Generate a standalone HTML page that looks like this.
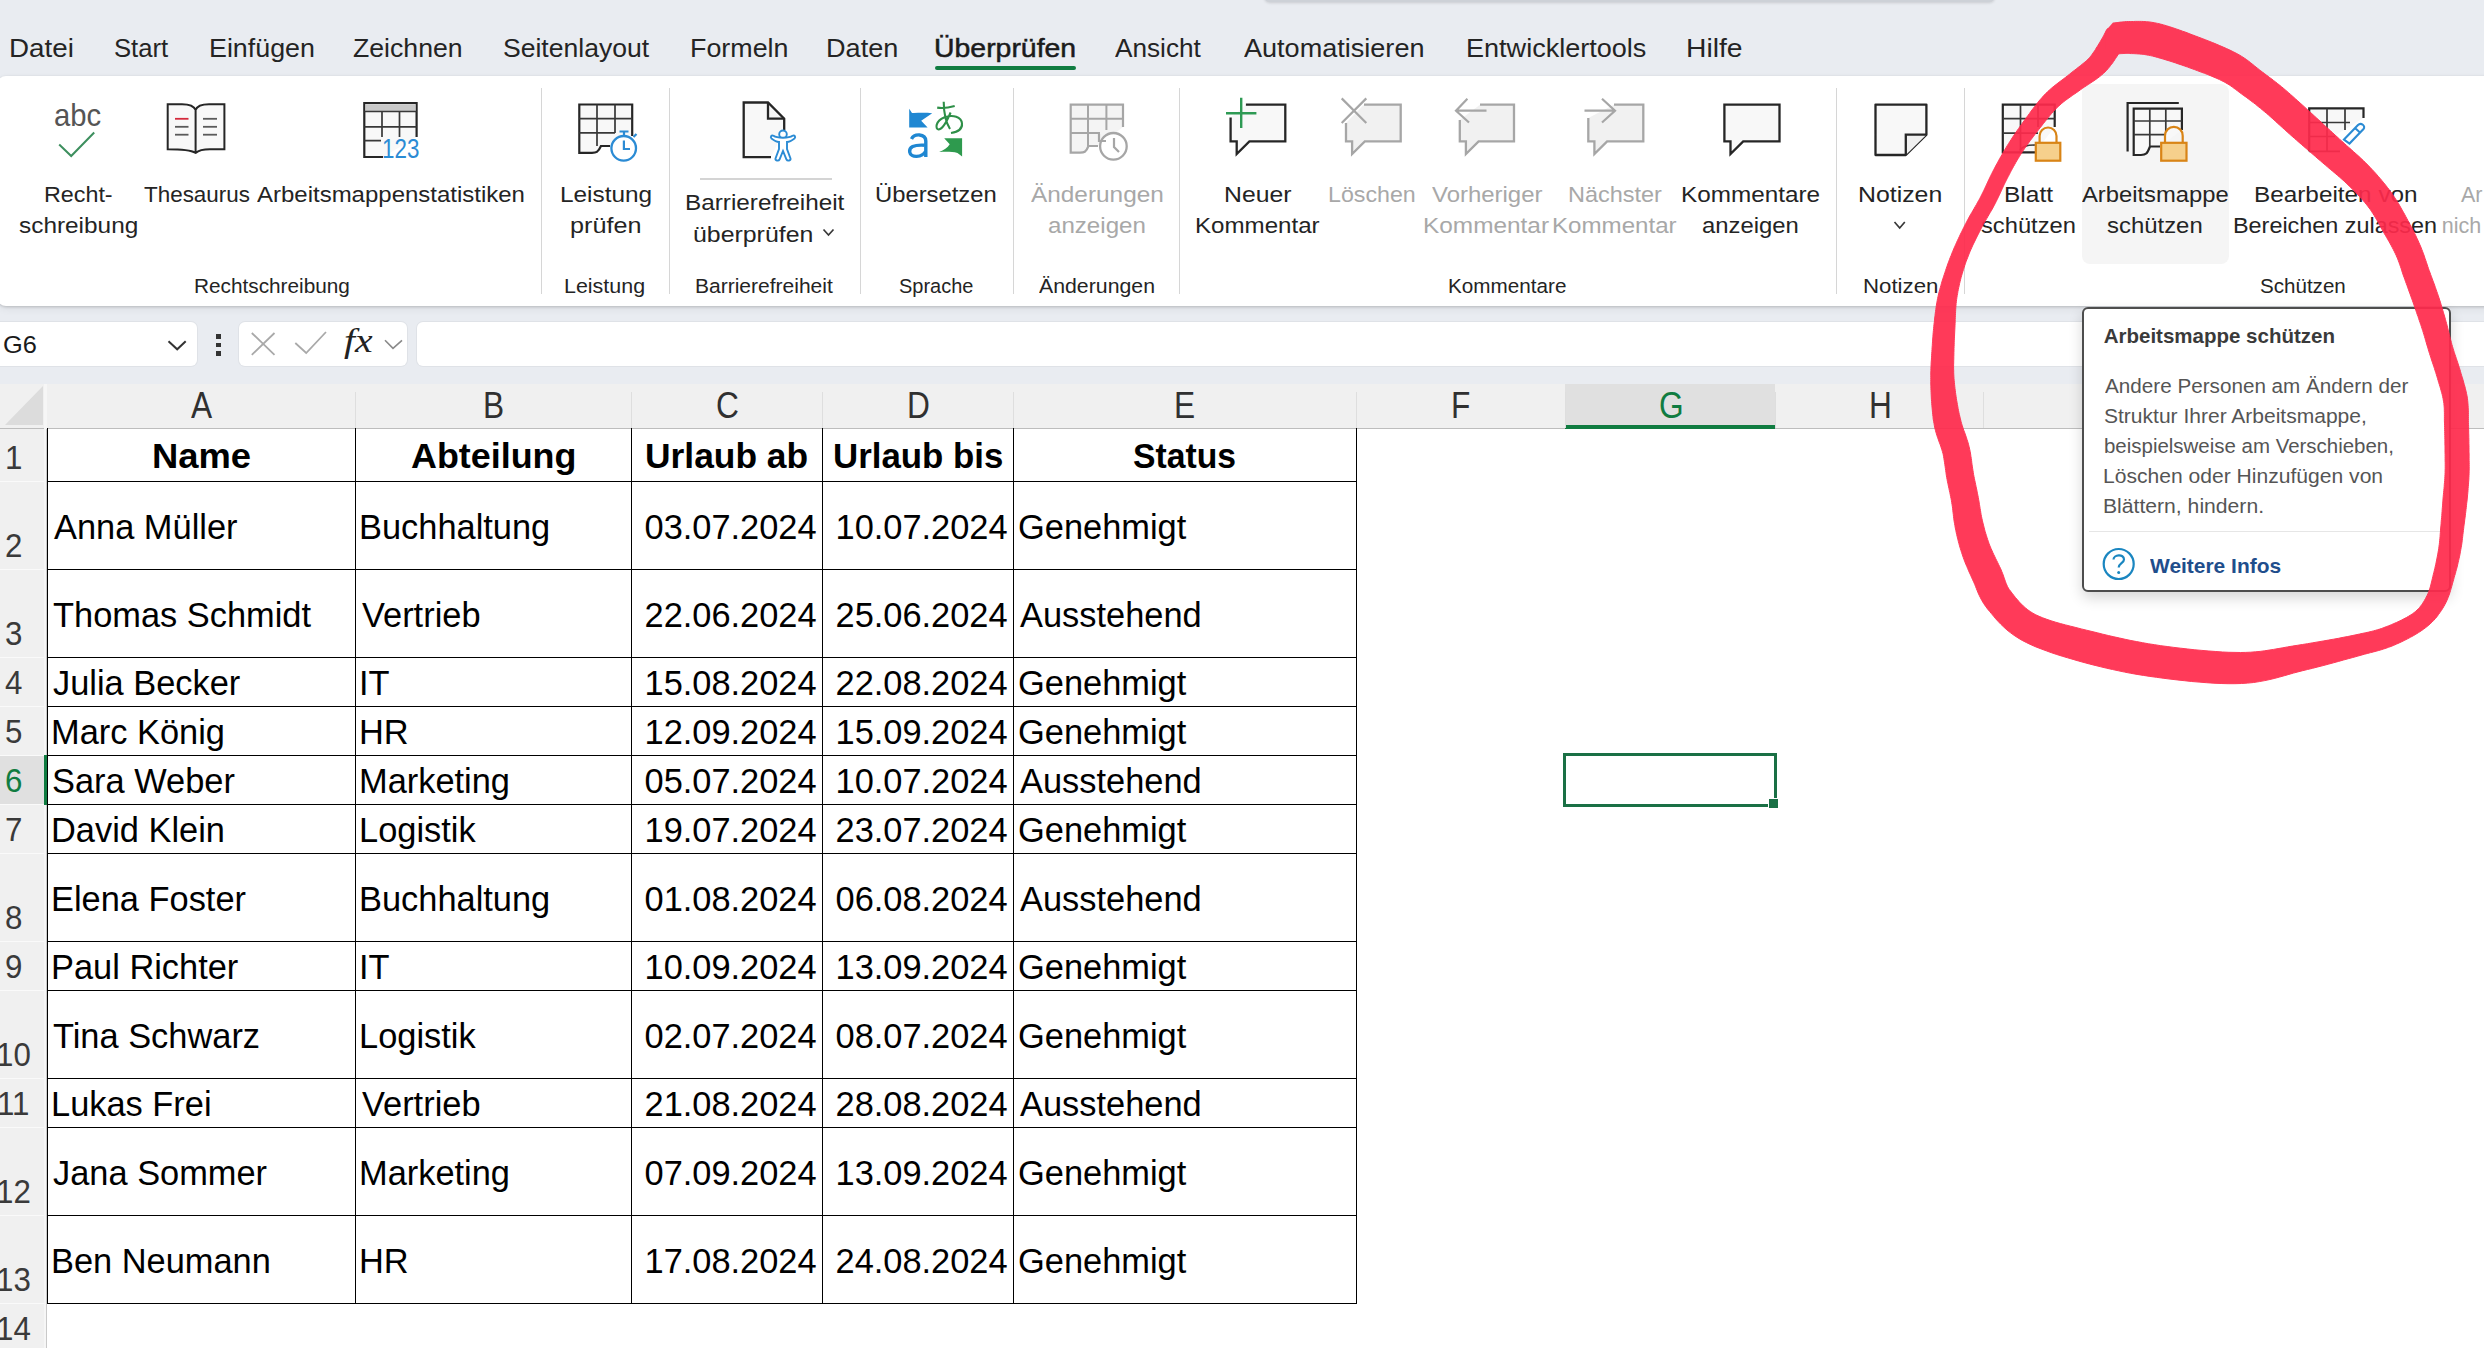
<!DOCTYPE html><html><head><meta charset="utf-8"><style>
html,body{margin:0;padding:0}
body{width:2484px;height:1348px;overflow:hidden;position:relative;background:#e9ecf1;font-family:"Liberation Sans",sans-serif}
.t{position:absolute;white-space:pre;line-height:1;transform-origin:0 0}
.r{position:absolute}
svg{position:absolute;left:0;top:0;overflow:visible}
</style></head><body>
<div class="r" style="left:1264px;top:-4px;width:731px;height:5.5px;background:#cdd1d7;border-radius:0 0 6px 6px;box-shadow:0 1px 3px rgba(0,0,0,.14)"></div>
<div class="t" style="left:9.46px;top:34.90px;font-size:26px;color:#242424;font-weight:normal;font-style:normal;font-family:'Liberation Sans', sans-serif;transform:scaleX(1.0684);">Datei</div>
<div class="t" style="left:114.21px;top:34.90px;font-size:26px;color:#242424;font-weight:normal;font-style:normal;font-family:'Liberation Sans', sans-serif;transform:scaleX(0.9870);">Start</div>
<div class="t" style="left:209.14px;top:34.90px;font-size:26px;color:#242424;font-weight:normal;font-style:normal;font-family:'Liberation Sans', sans-serif;transform:scaleX(1.0323);">Einfügen</div>
<div class="t" style="left:353.28px;top:34.90px;font-size:26px;color:#242424;font-weight:normal;font-style:normal;font-family:'Liberation Sans', sans-serif;transform:scaleX(1.0250);">Zeichnen</div>
<div class="t" style="left:502.58px;top:34.90px;font-size:26px;color:#242424;font-weight:normal;font-style:normal;font-family:'Liberation Sans', sans-serif;transform:scaleX(1.0211);">Seitenlayout</div>
<div class="t" style="left:689.93px;top:34.90px;font-size:26px;color:#242424;font-weight:normal;font-style:normal;font-family:'Liberation Sans', sans-serif;transform:scaleX(1.0326);">Formeln</div>
<div class="t" style="left:825.82px;top:34.90px;font-size:26px;color:#242424;font-weight:normal;font-style:normal;font-family:'Liberation Sans', sans-serif;transform:scaleX(1.0424);">Daten</div>
<div class="t" style="left:934.01px;top:34.90px;font-size:26px;color:#1b1b1b;font-weight:normal;font-style:normal;font-family:'Liberation Sans', sans-serif;transform:scaleX(1.0929);-webkit-text-stroke:0.5px #1b1b1b;">Überprüfen</div>
<div class="t" style="left:1114.50px;top:34.90px;font-size:26px;color:#242424;font-weight:normal;font-style:normal;font-family:'Liberation Sans', sans-serif;transform:scaleX(1.0059);">Ansicht</div>
<div class="t" style="left:1243.50px;top:34.90px;font-size:26px;color:#242424;font-weight:normal;font-style:normal;font-family:'Liberation Sans', sans-serif;transform:scaleX(1.0407);">Automatisieren</div>
<div class="t" style="left:1465.72px;top:34.90px;font-size:26px;color:#242424;font-weight:normal;font-style:normal;font-family:'Liberation Sans', sans-serif;transform:scaleX(1.0404);">Entwicklertools</div>
<div class="t" style="left:1685.82px;top:34.90px;font-size:26px;color:#242424;font-weight:normal;font-style:normal;font-family:'Liberation Sans', sans-serif;transform:scaleX(1.0878);">Hilfe</div>
<div class="r" style="left:935px;top:66px;width:141px;height:4px;background:#107c41;border-radius:2px"></div>
<div class="r" style="left:-3px;top:76px;width:2563px;height:230px;background:#ffffff;border-radius:9px;box-shadow:0 1px 3px rgba(0,0,0,.18),0 3px 8px rgba(0,0,0,.06)"></div>
<div class="r" style="left:2082px;top:84px;width:147px;height:180px;background:#f5f5f5;border-radius:8px"></div>
<div class="r" style="left:541px;top:88px;width:1px;height:206px;background:#d6d6d6;"></div>
<div class="r" style="left:669px;top:88px;width:1px;height:206px;background:#d6d6d6;"></div>
<div class="r" style="left:860px;top:88px;width:1px;height:206px;background:#d6d6d6;"></div>
<div class="r" style="left:1013px;top:88px;width:1px;height:206px;background:#d6d6d6;"></div>
<div class="r" style="left:1179px;top:88px;width:1px;height:206px;background:#d6d6d6;"></div>
<div class="r" style="left:1836px;top:88px;width:1px;height:206px;background:#d6d6d6;"></div>
<div class="r" style="left:1964px;top:88px;width:1px;height:206px;background:#d6d6d6;"></div>
<div class="r" style="left:700px;top:178px;width:132px;height:2px;background:#d4d4d4;"></div>
<div class="t" style="left:44.03px;top:184.60px;font-size:21.5px;color:#242424;font-weight:normal;font-style:normal;font-family:'Liberation Sans', sans-serif;transform:scaleX(1.0836);">Recht-</div>
<div class="t" style="left:19.37px;top:216.30px;font-size:21.5px;color:#242424;font-weight:normal;font-style:normal;font-family:'Liberation Sans', sans-serif;transform:scaleX(1.1340);">schreibung</div>
<div class="t" style="left:144.30px;top:184.60px;font-size:21.5px;color:#242424;font-weight:normal;font-style:normal;font-family:'Liberation Sans', sans-serif;transform:scaleX(1.0426);">Thesaurus</div>
<div class="t" style="left:257.10px;top:184.60px;font-size:21.5px;color:#242424;font-weight:normal;font-style:normal;font-family:'Liberation Sans', sans-serif;transform:scaleX(1.1155);">Arbeitsmappenstatistiken</div>
<div class="t" style="left:559.63px;top:184.60px;font-size:21.5px;color:#242424;font-weight:normal;font-style:normal;font-family:'Liberation Sans', sans-serif;transform:scaleX(1.1333);">Leistung</div>
<div class="t" style="left:569.73px;top:216.30px;font-size:21.5px;color:#242424;font-weight:normal;font-style:normal;font-family:'Liberation Sans', sans-serif;transform:scaleX(1.1712);">prüfen</div>
<div class="t" style="left:684.64px;top:192.80px;font-size:21.5px;color:#242424;font-weight:normal;font-style:normal;font-family:'Liberation Sans', sans-serif;transform:scaleX(1.1302);">Barrierefreiheit</div>
<div class="t" style="left:693.44px;top:224.50px;font-size:21.5px;color:#242424;font-weight:normal;font-style:normal;font-family:'Liberation Sans', sans-serif;transform:scaleX(1.1569);">überprüfen</div>
<div class="t" style="left:875.29px;top:184.60px;font-size:21.5px;color:#242424;font-weight:normal;font-style:normal;font-family:'Liberation Sans', sans-serif;transform:scaleX(1.1075);">Übersetzen</div>
<div class="t" style="left:1030.80px;top:184.60px;font-size:21.5px;color:#a8a8a8;font-weight:normal;font-style:normal;font-family:'Liberation Sans', sans-serif;transform:scaleX(1.1336);">Änderungen</div>
<div class="t" style="left:1047.78px;top:216.30px;font-size:21.5px;color:#a8a8a8;font-weight:normal;font-style:normal;font-family:'Liberation Sans', sans-serif;transform:scaleX(1.1212);">anzeigen</div>
<div class="t" style="left:1224.20px;top:184.60px;font-size:21.5px;color:#242424;font-weight:normal;font-style:normal;font-family:'Liberation Sans', sans-serif;transform:scaleX(1.1518);">Neuer</div>
<div class="t" style="left:1195.06px;top:216.30px;font-size:21.5px;color:#242424;font-weight:normal;font-style:normal;font-family:'Liberation Sans', sans-serif;transform:scaleX(1.1211);">Kommentar</div>
<div class="t" style="left:1327.94px;top:184.60px;font-size:21.5px;color:#a8a8a8;font-weight:normal;font-style:normal;font-family:'Liberation Sans', sans-serif;transform:scaleX(1.0795);">Löschen</div>
<div class="t" style="left:1432.40px;top:184.60px;font-size:21.5px;color:#a8a8a8;font-weight:normal;font-style:normal;font-family:'Liberation Sans', sans-serif;transform:scaleX(1.1131);">Vorheriger</div>
<div class="t" style="left:1423.43px;top:216.30px;font-size:21.5px;color:#a8a8a8;font-weight:normal;font-style:normal;font-family:'Liberation Sans', sans-serif;transform:scaleX(1.1339);">Kommentar</div>
<div class="t" style="left:1568.32px;top:184.60px;font-size:21.5px;color:#a8a8a8;font-weight:normal;font-style:normal;font-family:'Liberation Sans', sans-serif;transform:scaleX(1.0917);">Nächster</div>
<div class="t" style="left:1552.36px;top:216.30px;font-size:21.5px;color:#a8a8a8;font-weight:normal;font-style:normal;font-family:'Liberation Sans', sans-serif;transform:scaleX(1.1211);">Kommentar</div>
<div class="t" style="left:1681.24px;top:184.60px;font-size:21.5px;color:#242424;font-weight:normal;font-style:normal;font-family:'Liberation Sans', sans-serif;transform:scaleX(1.1292);">Kommentare</div>
<div class="t" style="left:1702.29px;top:216.30px;font-size:21.5px;color:#242424;font-weight:normal;font-style:normal;font-family:'Liberation Sans', sans-serif;transform:scaleX(1.1094);">anzeigen</div>
<div class="t" style="left:1857.89px;top:184.60px;font-size:21.5px;color:#242424;font-weight:normal;font-style:normal;font-family:'Liberation Sans', sans-serif;transform:scaleX(1.1557);">Notizen</div>
<div class="t" style="left:2003.62px;top:184.60px;font-size:21.5px;color:#242424;font-weight:normal;font-style:normal;font-family:'Liberation Sans', sans-serif;transform:scaleX(1.1390);">Blatt</div>
<div class="t" style="left:1980.90px;top:216.30px;font-size:21.5px;color:#242424;font-weight:normal;font-style:normal;font-family:'Liberation Sans', sans-serif;transform:scaleX(1.1024);">schützen</div>
<div class="t" style="left:2081.60px;top:184.60px;font-size:21.5px;color:#242424;font-weight:normal;font-style:normal;font-family:'Liberation Sans', sans-serif;transform:scaleX(1.1061);">Arbeitsmappe</div>
<div class="t" style="left:2107.19px;top:216.30px;font-size:21.5px;color:#242424;font-weight:normal;font-style:normal;font-family:'Liberation Sans', sans-serif;transform:scaleX(1.1119);">schützen</div>
<div class="t" style="left:2253.84px;top:184.60px;font-size:21.5px;color:#242424;font-weight:normal;font-style:normal;font-family:'Liberation Sans', sans-serif;transform:scaleX(1.1312);">Bearbeiten von</div>
<div class="t" style="left:2232.72px;top:216.30px;font-size:21.5px;color:#242424;font-weight:normal;font-style:normal;font-family:'Liberation Sans', sans-serif;transform:scaleX(1.0875);">Bereichen zulassen</div>
<div class="t" style="left:2461.00px;top:184.60px;font-size:21.5px;color:#a8a8a8;font-weight:normal;font-style:normal;font-family:'Liberation Sans', sans-serif;">Ar</div>
<div class="t" style="left:2441.80px;top:216.30px;font-size:21.5px;color:#a8a8a8;font-weight:normal;font-style:normal;font-family:'Liberation Sans', sans-serif;">nich</div>
<div class="t" style="left:193.57px;top:275.80px;font-size:20.5px;color:#242424;font-weight:normal;font-style:normal;font-family:'Liberation Sans', sans-serif;transform:scaleX(1.0132);">Rechtschreibung</div>
<div class="t" style="left:564.21px;top:275.80px;font-size:20.5px;color:#242424;font-weight:normal;font-style:normal;font-family:'Liberation Sans', sans-serif;transform:scaleX(1.0459);">Leistung</div>
<div class="t" style="left:695.25px;top:275.80px;font-size:20.5px;color:#242424;font-weight:normal;font-style:normal;font-family:'Liberation Sans', sans-serif;transform:scaleX(1.0250);">Barrierefreiheit</div>
<div class="t" style="left:899.23px;top:275.80px;font-size:20.5px;color:#242424;font-weight:normal;font-style:normal;font-family:'Liberation Sans', sans-serif;transform:scaleX(0.9747);">Sprache</div>
<div class="t" style="left:1038.80px;top:275.80px;font-size:20.5px;color:#242424;font-weight:normal;font-style:normal;font-family:'Liberation Sans', sans-serif;transform:scaleX(1.0382);">Änderungen</div>
<div class="t" style="left:1448.28px;top:275.80px;font-size:20.5px;color:#242424;font-weight:normal;font-style:normal;font-family:'Liberation Sans', sans-serif;transform:scaleX(1.0087);">Kommentare</div>
<div class="t" style="left:1862.83px;top:275.80px;font-size:20.5px;color:#242424;font-weight:normal;font-style:normal;font-family:'Liberation Sans', sans-serif;transform:scaleX(1.0848);">Notizen</div>
<div class="t" style="left:2259.70px;top:275.80px;font-size:20.5px;color:#242424;font-weight:normal;font-style:normal;font-family:'Liberation Sans', sans-serif;transform:scaleX(1.0036);">Schützen</div>
<svg width="2484" height="400"><polyline points="59.2,144.5 71.2,156 94.2,132.5" fill="none" stroke="#3d8f5e" stroke-width="2"/><path d="M195.6,152.9 C190,149.7 182,149.3 167.7,149.3 V104.2 H182 C190,104.2 194,106 195.6,110 C197,106 201,104.2 209,104.2 H224.4 V149.3 H210 C202,149.3 199,150 195.6,152.9 Z M195.6,110 V152.9" fill="#f8f8f8" stroke="#262626" stroke-width="2"/><line x1="175" y1="118.8" x2="188.5" y2="118.8" stroke="#d42a3c" stroke-width="1.8"/><line x1="175" y1="126.8" x2="188.5" y2="126.8" stroke="#5a5a5a" stroke-width="1.8"/><line x1="175" y1="134.7" x2="188.5" y2="134.7" stroke="#5a5a5a" stroke-width="1.8"/><line x1="203" y1="118.8" x2="217" y2="118.8" stroke="#5a5a5a" stroke-width="1.8"/><line x1="203" y1="126.8" x2="217" y2="126.8" stroke="#5a5a5a" stroke-width="1.8"/><line x1="203" y1="134.7" x2="217" y2="134.7" stroke="#5a5a5a" stroke-width="1.8"/><path d="M383,157 H364.3 V103 H416.6 V137" fill="#f8f8f8" stroke="#262626" stroke-width="2.2"/><rect x="365.4" y="104.2" width="50.2" height="7" fill="#c9c9c9"/><path d="M364.3,111.5 H416.6 M364.3,126.8 H416.6 M364.3,140.7 H381 M382,111.5 V137 M399.5,111.5 V137" fill="none" stroke="#383838" stroke-width="1.7"/><path d="M610,146 H601 C598,152.5 596,152.8 592,152.8 H579.3 V104.5 H632.2 V136" fill="#f8f8f8" stroke="#262626" stroke-width="2.2"/><path d="M579.3,118.7 H632.2 M579.3,132.9 H615 M597,104.5 V146 M615,104.5 V132.9" fill="none" stroke="#383838" stroke-width="1.7"/><circle cx="623.7" cy="148.3" r="12.3" fill="#fff" stroke="#2b8bd4" stroke-width="2.3"/><path d="M623.9,140.5 V149 H630 M619.5,131.5 H628.5 M624,131.5 V135.5 M633.5,137 L636.5,134" fill="none" stroke="#2b8bd4" stroke-width="2.2"/><path d="M771,157.1 H743.7 V102.5 H768 L784.2,118.7 V130" fill="#f8f8f8" stroke="#262626" stroke-width="2.3"/><path d="M768,102.5 V118.7 H784.2" fill="none" stroke="#262626" stroke-width="2.3"/><circle cx="783" cy="134.3" r="3.8" fill="#fff" stroke="#2b8bd4" stroke-width="1.9"/><path d="M771.5,138.5 C774,140.5 778,142 779,142 V149 L775.5,158.5 C775,160.5 778.5,161.5 779.5,159.5 L783,151 L786.5,159.5 C787.5,161.5 791,160.5 790.5,158.5 L787,149 V142 C788,142 792,140.5 794.5,138.5 C796,137 794.5,134.5 792.5,135.8 C789,138.3 777,138.3 773.5,135.8 C771.5,134.5 770,137 771.5,138.5 Z" fill="#fff" stroke="#2b8bd4" stroke-width="1.9"/><path d="M909.2,108.7 L912,112.9 C918,113 926,112.5 932.2,113.3 L921.2,120.7 L927.6,127.6 H909.2 Z" fill="#1f87d2"/><path d="M911.5,139 C914,133.5 925.5,133 925.8,141 V157 M925.8,145.3 C913,144.3 909,147.5 909.7,152 C910.5,158 922,158 925.8,151" fill="none" stroke="#1f87d2" stroke-width="3.4"/><path d="M944.2,138.2 H962.1 V156.6 L957.5,152.9 C952,151.5 945,151.6 939.1,152 C944,150 947.5,148 949.7,144.2 Z" fill="#2e9a4e"/><path d="M937.2,107.6 C942,108.4 949,107.6 954.7,106 M943.7,101.8 C943.8,112 945.5,122 950,129 M950.6,112.5 C947,121 942,129.5 938.5,129.5 C935,129 935.5,121 944,117.5 C953,114 961.5,117 962,123.5 C962.5,129 957,132 951,133" fill="none" stroke="#2e8f48" stroke-width="2.1"/><path d="M1098,146 H1088.5 C1086,152.5 1084,152.6 1080,152.6 H1070.7 V104.7 H1123 V127" fill="#f4f4f4" stroke="#a6a6a6" stroke-width="2.2"/><path d="M1070.7,118.8 H1123 M1070.7,132.9 H1100 M1088,104.7 V146 M1106.4,104.7 V130" fill="none" stroke="#a6a6a6" stroke-width="2"/><circle cx="1113.4" cy="146.3" r="13.3" fill="#fff" stroke="#a6a6a6" stroke-width="2.3"/><path d="M1114,138 V147 L1119,152 M1099,134 V141 H1106" fill="none" stroke="#a6a6a6" stroke-width="2.2"/><path d="M1245.9,104.7 H1285.3 V141.4 H1249.3999999999999 L1236.6999999999998,154 V141.4 H1230.6 V117.4" fill="#f8f8f8" stroke="#262626" stroke-width="2.3" stroke-linejoin="miter"/><path d="M1241.2,97.7 V128 M1226,113.2 H1256.4" stroke="#2e9a54" stroke-width="2.4"/><path d="M1364,104.7 H1400.7 V141.4 H1364.8 L1352.1,154 V141.4 H1346 V123" fill="#f1f1f1" stroke="#a6a6a6" stroke-width="2.3" stroke-linejoin="miter"/><path d="M1341.7,98.4 L1366.3,123 M1366.3,98.4 L1341.7,123" stroke="#a6a6a6" stroke-width="2.2"/><path d="M1480,104.7 H1514 V141.4 H1478.6 L1465.8999999999999,154 V141.4 H1459.8 V120" fill="#f1f1f1" stroke="#a6a6a6" stroke-width="2.3" stroke-linejoin="miter"/><path d="M1456,110.7 H1486.5 M1467.4,98.8 L1456,110.7 L1469,122.5" fill="none" stroke="#a6a6a6" stroke-width="2.2"/><path d="M1614,104.7 H1643.3 V141.4 H1607.1 L1594.3999999999999,154 V141.4 H1588.3 V118" fill="#f1f1f1" stroke="#a6a6a6" stroke-width="2.3" stroke-linejoin="miter"/><path d="M1584.5,110.7 H1615 M1602,98.8 L1615,110.7 L1602,122.5" fill="none" stroke="#a6a6a6" stroke-width="2.2"/><path d="M1724.4,104.7 H1779.5 V141.4 H1743.2 L1730.5,154 V141.4 H1724.4 V104.7 Z" fill="#f8f8f8" stroke="#262626" stroke-width="2.3" stroke-linejoin="miter"/><path d="M1875.5,104.6 H1926.4 V134.7 L1905.8,155 H1875.5 Z" fill="#f8f8f8" stroke="#262626" stroke-width="2.3" stroke-linejoin="round"/><path d="M1905.8,155 V134.7 H1926.4" fill="#f0f0f0" stroke="#262626" stroke-width="2.3"/><path d="M2035,152.3 H2002.8 V104.6 H2054.7 V127" fill="#f8f8f8" stroke="#262626" stroke-width="2.2"/><path d="M2002.8,118.7 H2054.7 M2002.8,133.2 H2038 M2020.5,104.6 V152.3 M2038,104.6 V127" fill="none" stroke="#383838" stroke-width="1.7"/><path d="M2020,150 C2023,146.5 2026,145 2035,145" fill="none" stroke="#383838" stroke-width="1.7"/><path d="M2039.6,142.8 V135.95000000000005 A8.450000000000045,8.450000000000045 0 0 1 2056.5,135.95000000000005 V142.8" fill="none" stroke="#d98416" stroke-width="2.2"/><rect x="2035.8" y="142.8" width="24.500000000000227" height="17.9" fill="#f6d08c" stroke="#d98416" stroke-width="2.2"/><path d="M2127.6,151.5 V103 H2178.8" fill="none" stroke="#262626" stroke-width="2.2"/><path d="M2160,146.5 H2150 C2147,154 2146,155 2141,155 H2133.7 V108.7 H2181.9 V130" fill="#f8f8f8" stroke="#262626" stroke-width="2.2"/><path d="M2133.7,121 H2181.9 M2133.7,134.7 H2165.8 M2149.8,108.7 V146.5 M2165.8,108.7 V132" fill="none" stroke="#383838" stroke-width="1.7"/><path d="M2165.0,142.8 V135.64999999999992 A8.849999999999909,8.849999999999909 0 0 1 2182.7,135.64999999999992 V142.8" fill="none" stroke="#d98416" stroke-width="2.2"/><rect x="2161.2" y="142.8" width="25.300000000000182" height="17.9" fill="#f6d08c" stroke="#d98416" stroke-width="2.2"/><path d="M2309.2,151.3 V108.4 H2363.5 V118" fill="#f8f8f8" stroke="#262626" stroke-width="2.2"/><path d="M2309.2,122.5 H2350 M2309.2,136.5 H2335 M2327,108.4 V151.3 M2345,108.4 V130 M2309.2,151.3 H2340" fill="none" stroke="#383838" stroke-width="1.7"/><path d="M2344,139.5 L2358,125 C2361,122 2366,126 2363.5,129 L2349.5,143.5 Z M2355,128 L2360.5,133" fill="#fff" stroke="#2b8bd4" stroke-width="2.1"/><polyline points="823.5,229.5 828.5,235 833.5,229.5" fill="none" stroke="#383838" stroke-width="1.7"/><polyline points="1894.5,222 1899.7,228 1904.8,222" fill="none" stroke="#383838" stroke-width="1.7"/></svg><div class="t" style="left:54.29px;top:98.90px;font-size:32px;color:#555555;font-weight:normal;font-style:normal;font-family:'Liberation Sans', sans-serif;transform:scaleX(0.9140);">abc</div><div class="t" style="left:382.34px;top:135.60px;font-size:27px;color:#2b8bd4;font-weight:normal;font-style:normal;font-family:'Liberation Sans', sans-serif;transform:scaleX(0.8286);">123</div>
<div class="r" style="left:0px;top:322px;width:197px;height:44px;background:#ffffff;border-radius:0 6px 6px 0;box-shadow:0 0 0 1px rgba(0,0,0,.04)"></div>
<div class="t" style="left:3.44px;top:333.00px;font-size:24px;color:#1a1a1a;font-weight:normal;font-style:normal;font-family:'Liberation Sans', sans-serif;transform:scaleX(1.0567);">G6</div>
<div class="r" style="left:239px;top:322px;width:168px;height:44px;background:#ffffff;border-radius:6px;box-shadow:0 0 0 1px rgba(0,0,0,.04)"></div>
<div class="r" style="left:417px;top:322px;width:2143px;height:44px;background:#ffffff;border-radius:6px 0 0 6px;box-shadow:0 0 0 1px rgba(0,0,0,.04)"></div>
<div class="r" style="left:216px;top:334px;width:4.5px;height:4.5px;background:#333"></div>
<div class="r" style="left:216px;top:342.5px;width:4.5px;height:4.5px;background:#333"></div>
<div class="r" style="left:216px;top:351px;width:4.5px;height:4.5px;background:#333"></div>
<div class="t" style="left:344.00px;top:324.00px;font-size:34px;color:#222;font-weight:normal;font-style:italic;font-family:'Liberation Serif', serif;transform:scaleX(1.1667);">fx</div>
<svg width="2484" height="400"><polyline points="168.5,341.2 177.2,349.3 185.7,341.2" fill="none" stroke="#333" stroke-width="2"/><path d="M251.8,333 L274.5,354.8 M274.5,333 L251.8,354.8" stroke="#a9a9a9" stroke-width="1.8"/><polyline points="295.3,343 306.2,353 326,332" fill="none" stroke="#a9a9a9" stroke-width="1.8"/><polyline points="385,340.3 393,348.4 402,340.3" fill="none" stroke="#8a8a8a" stroke-width="1.6"/></svg>
<div class="r" style="left:0px;top:384px;width:2484px;height:44px;background:#f0f0f0;"></div>
<div class="r" style="left:0px;top:428px;width:2484px;height:1px;background:#bdbdbd;"></div>
<div class="r" style="left:1565px;top:384px;width:210px;height:44px;background:#e0e0e0;"></div>
<div class="r" style="left:1565px;top:425px;width:210px;height:3.5px;background:#107c41;"></div>
<div class="r" style="left:0px;top:429px;width:46px;height:919px;background:#f0f0f0;"></div>
<div class="r" style="left:44px;top:384px;width:3px;height:964px;background:#f6f6f6;"></div>
<div class="r" style="left:46px;top:429px;width:1px;height:919px;background:#c9c9c9;"></div>
<div class="r" style="left:355px;top:392px;width:1px;height:36px;background:#dedede;"></div>
<div class="r" style="left:631px;top:392px;width:1px;height:36px;background:#dedede;"></div>
<div class="r" style="left:822px;top:392px;width:1px;height:36px;background:#dedede;"></div>
<div class="r" style="left:1013px;top:392px;width:1px;height:36px;background:#dedede;"></div>
<div class="r" style="left:1356px;top:392px;width:1px;height:36px;background:#dedede;"></div>
<div class="r" style="left:1565px;top:392px;width:1px;height:36px;background:#dedede;"></div>
<div class="r" style="left:1775px;top:392px;width:1px;height:36px;background:#dedede;"></div>
<div class="r" style="left:1983px;top:392px;width:1px;height:36px;background:#dedede;"></div>
<div class="r" style="left:0px;top:481px;width:44px;height:1px;background:#fafafa;"></div>
<div class="r" style="left:0px;top:569px;width:44px;height:1px;background:#fafafa;"></div>
<div class="r" style="left:0px;top:657px;width:44px;height:1px;background:#fafafa;"></div>
<div class="r" style="left:0px;top:706px;width:44px;height:1px;background:#fafafa;"></div>
<div class="r" style="left:0px;top:755px;width:44px;height:1px;background:#fafafa;"></div>
<div class="r" style="left:0px;top:804px;width:44px;height:1px;background:#fafafa;"></div>
<div class="r" style="left:0px;top:853px;width:44px;height:1px;background:#fafafa;"></div>
<div class="r" style="left:0px;top:941px;width:44px;height:1px;background:#fafafa;"></div>
<div class="r" style="left:0px;top:990px;width:44px;height:1px;background:#fafafa;"></div>
<div class="r" style="left:0px;top:1078px;width:44px;height:1px;background:#fafafa;"></div>
<div class="r" style="left:0px;top:1127px;width:44px;height:1px;background:#fafafa;"></div>
<div class="r" style="left:0px;top:1215px;width:44px;height:1px;background:#fafafa;"></div>
<div class="r" style="left:0px;top:1303px;width:44px;height:1px;background:#fafafa;"></div>
<div class="r" style="left:0px;top:756px;width:44px;height:48px;background:#e0e0e0;"></div>
<div class="r" style="left:44px;top:755px;width:3.5px;height:50px;background:#107c41;"></div>
<div class="t" style="left:191.44px;top:387.80px;font-size:36px;color:#303030;font-weight:normal;font-style:normal;font-family:'Liberation Sans', sans-serif;transform:scaleX(0.8800);">A</div>
<div class="t" style="left:483.00px;top:387.80px;font-size:36px;color:#303030;font-weight:normal;font-style:normal;font-family:'Liberation Sans', sans-serif;transform:scaleX(0.8800);">B</div>
<div class="t" style="left:715.62px;top:387.80px;font-size:36px;color:#303030;font-weight:normal;font-style:normal;font-family:'Liberation Sans', sans-serif;transform:scaleX(0.8800);">C</div>
<div class="t" style="left:906.62px;top:387.80px;font-size:36px;color:#303030;font-weight:normal;font-style:normal;font-family:'Liberation Sans', sans-serif;transform:scaleX(0.8800);">D</div>
<div class="t" style="left:1174.06px;top:387.80px;font-size:36px;color:#303030;font-weight:normal;font-style:normal;font-family:'Liberation Sans', sans-serif;transform:scaleX(0.8800);">E</div>
<div class="t" style="left:1450.94px;top:387.80px;font-size:36px;color:#303030;font-weight:normal;font-style:normal;font-family:'Liberation Sans', sans-serif;transform:scaleX(0.8800);">F</div>
<div class="t" style="left:1659.12px;top:387.80px;font-size:36px;color:#107c41;font-weight:normal;font-style:normal;font-family:'Liberation Sans', sans-serif;transform:scaleX(0.8800);">G</div>
<div class="t" style="left:1868.56px;top:387.80px;font-size:36px;color:#303030;font-weight:normal;font-style:normal;font-family:'Liberation Sans', sans-serif;transform:scaleX(0.8800);">H</div>
<svg width="60" height="60" style="left:0;top:380px"><polygon points="43,6 43,45 5,45" fill="#dcdcdc"/></svg>
<div class="t" style="left:4.80px;top:440.00px;font-size:34px;color:#3a3a3a;font-weight:normal;font-style:normal;font-family:'Liberation Sans', sans-serif;transform:scaleX(0.9200);">1</div>
<div class="t" style="left:5.26px;top:528.00px;font-size:34px;color:#3a3a3a;font-weight:normal;font-style:normal;font-family:'Liberation Sans', sans-serif;transform:scaleX(0.9200);">2</div>
<div class="t" style="left:5.26px;top:616.00px;font-size:34px;color:#3a3a3a;font-weight:normal;font-style:normal;font-family:'Liberation Sans', sans-serif;transform:scaleX(0.9200);">3</div>
<div class="t" style="left:5.26px;top:665.00px;font-size:34px;color:#3a3a3a;font-weight:normal;font-style:normal;font-family:'Liberation Sans', sans-serif;transform:scaleX(0.9200);">4</div>
<div class="t" style="left:4.80px;top:714.00px;font-size:34px;color:#3a3a3a;font-weight:normal;font-style:normal;font-family:'Liberation Sans', sans-serif;transform:scaleX(0.9200);">5</div>
<div class="t" style="left:4.80px;top:763.00px;font-size:34px;color:#107c41;font-weight:normal;font-style:normal;font-family:'Liberation Sans', sans-serif;transform:scaleX(0.9200);">6</div>
<div class="t" style="left:5.26px;top:812.00px;font-size:34px;color:#3a3a3a;font-weight:normal;font-style:normal;font-family:'Liberation Sans', sans-serif;transform:scaleX(0.9200);">7</div>
<div class="t" style="left:5.26px;top:900.00px;font-size:34px;color:#3a3a3a;font-weight:normal;font-style:normal;font-family:'Liberation Sans', sans-serif;transform:scaleX(0.9200);">8</div>
<div class="t" style="left:5.26px;top:949.00px;font-size:34px;color:#3a3a3a;font-weight:normal;font-style:normal;font-family:'Liberation Sans', sans-serif;transform:scaleX(0.9200);">9</div>
<div class="t" style="left:-4.40px;top:1037.00px;font-size:34px;color:#3a3a3a;font-weight:normal;font-style:normal;font-family:'Liberation Sans', sans-serif;transform:scaleX(0.9200);">10</div>
<div class="t" style="left:-3.02px;top:1086.00px;font-size:34px;color:#3a3a3a;font-weight:normal;font-style:normal;font-family:'Liberation Sans', sans-serif;transform:scaleX(0.9200);">11</div>
<div class="t" style="left:-3.94px;top:1174.00px;font-size:34px;color:#3a3a3a;font-weight:normal;font-style:normal;font-family:'Liberation Sans', sans-serif;transform:scaleX(0.9200);">12</div>
<div class="t" style="left:-4.40px;top:1262.00px;font-size:34px;color:#3a3a3a;font-weight:normal;font-style:normal;font-family:'Liberation Sans', sans-serif;transform:scaleX(0.9200);">13</div>
<div class="t" style="left:-4.40px;top:1311.00px;font-size:34px;color:#3a3a3a;font-weight:normal;font-style:normal;font-family:'Liberation Sans', sans-serif;transform:scaleX(0.9200);">14</div>
<div class="r" style="left:47px;top:429px;width:2437px;height:919px;background:#ffffff;"></div>
<div class="r" style="left:0px;top:481px;width:44px;height:1px;background:#fafafa;"></div>
<div class="r" style="left:0px;top:569px;width:44px;height:1px;background:#fafafa;"></div>
<div class="r" style="left:0px;top:657px;width:44px;height:1px;background:#fafafa;"></div>
<div class="r" style="left:0px;top:706px;width:44px;height:1px;background:#fafafa;"></div>
<div class="r" style="left:0px;top:755px;width:44px;height:1px;background:#fafafa;"></div>
<div class="r" style="left:0px;top:804px;width:44px;height:1px;background:#fafafa;"></div>
<div class="r" style="left:0px;top:853px;width:44px;height:1px;background:#fafafa;"></div>
<div class="r" style="left:0px;top:941px;width:44px;height:1px;background:#fafafa;"></div>
<div class="r" style="left:0px;top:990px;width:44px;height:1px;background:#fafafa;"></div>
<div class="r" style="left:0px;top:1078px;width:44px;height:1px;background:#fafafa;"></div>
<div class="r" style="left:0px;top:1127px;width:44px;height:1px;background:#fafafa;"></div>
<div class="r" style="left:0px;top:1215px;width:44px;height:1px;background:#fafafa;"></div>
<div class="r" style="left:0px;top:1303px;width:44px;height:1px;background:#fafafa;"></div>
<div class="r" style="left:46.5px;top:428px;width:1.5px;height:876px;background:#000;"></div>
<div class="r" style="left:354.5px;top:428px;width:1.5px;height:876px;background:#000;"></div>
<div class="r" style="left:630.5px;top:428px;width:1.5px;height:876px;background:#000;"></div>
<div class="r" style="left:821.5px;top:428px;width:1.5px;height:876px;background:#000;"></div>
<div class="r" style="left:1012.5px;top:428px;width:1.5px;height:876px;background:#000;"></div>
<div class="r" style="left:1355.5px;top:428px;width:1.5px;height:876px;background:#000;"></div>
<div class="r" style="left:47px;top:480.5px;width:1310px;height:1.5px;background:#000;"></div>
<div class="r" style="left:47px;top:568.5px;width:1310px;height:1.5px;background:#000;"></div>
<div class="r" style="left:47px;top:656.5px;width:1310px;height:1.5px;background:#000;"></div>
<div class="r" style="left:47px;top:705.5px;width:1310px;height:1.5px;background:#000;"></div>
<div class="r" style="left:47px;top:754.5px;width:1310px;height:1.5px;background:#000;"></div>
<div class="r" style="left:47px;top:803.5px;width:1310px;height:1.5px;background:#000;"></div>
<div class="r" style="left:47px;top:852.5px;width:1310px;height:1.5px;background:#000;"></div>
<div class="r" style="left:47px;top:940.5px;width:1310px;height:1.5px;background:#000;"></div>
<div class="r" style="left:47px;top:989.5px;width:1310px;height:1.5px;background:#000;"></div>
<div class="r" style="left:47px;top:1077.5px;width:1310px;height:1.5px;background:#000;"></div>
<div class="r" style="left:47px;top:1126.5px;width:1310px;height:1.5px;background:#000;"></div>
<div class="r" style="left:47px;top:1214.5px;width:1310px;height:1.5px;background:#000;"></div>
<div class="r" style="left:47px;top:1302.5px;width:1310px;height:1.5px;background:#000;"></div>
<div class="t" style="left:152.12px;top:437.80px;font-size:35px;color:#000;font-weight:bold;font-style:normal;font-family:'Liberation Sans', sans-serif;transform:scaleX(1.0391);">Name</div>
<div class="t" style="left:410.77px;top:437.80px;font-size:35px;color:#000;font-weight:bold;font-style:normal;font-family:'Liberation Sans', sans-serif;transform:scaleX(1.0253);">Abteilung</div>
<div class="t" style="left:645.48px;top:437.80px;font-size:35px;color:#000;font-weight:bold;font-style:normal;font-family:'Liberation Sans', sans-serif;transform:scaleX(1.0108);">Urlaub ab</div>
<div class="t" style="left:832.71px;top:437.80px;font-size:35px;color:#000;font-weight:bold;font-style:normal;font-family:'Liberation Sans', sans-serif;transform:scaleX(0.9952);">Urlaub bis</div>
<div class="t" style="left:1133.24px;top:437.80px;font-size:35px;color:#000;font-weight:bold;font-style:normal;font-family:'Liberation Sans', sans-serif;transform:scaleX(0.9629);">Status</div>
<div class="t" style="left:54.00px;top:509.80px;font-size:34.4px;color:#000;font-weight:normal;font-style:normal;font-family:'Liberation Sans', sans-serif;">Anna Müller</div>
<div class="t" style="left:359.00px;top:509.80px;font-size:34.4px;color:#000;font-weight:normal;font-style:normal;font-family:'Liberation Sans', sans-serif;">Buchhaltung</div>
<div class="t" style="left:644.50px;top:509.80px;font-size:34.4px;color:#000;font-weight:normal;font-style:normal;font-family:'Liberation Sans', sans-serif;">03.07.2024</div>
<div class="t" style="left:835.50px;top:509.80px;font-size:34.4px;color:#000;font-weight:normal;font-style:normal;font-family:'Liberation Sans', sans-serif;">10.07.2024</div>
<div class="t" style="left:1018.00px;top:509.80px;font-size:34.4px;color:#000;font-weight:normal;font-style:normal;font-family:'Liberation Sans', sans-serif;">Genehmigt</div>
<div class="t" style="left:53.00px;top:597.80px;font-size:34.4px;color:#000;font-weight:normal;font-style:normal;font-family:'Liberation Sans', sans-serif;">Thomas Schmidt</div>
<div class="t" style="left:362.00px;top:597.80px;font-size:34.4px;color:#000;font-weight:normal;font-style:normal;font-family:'Liberation Sans', sans-serif;">Vertrieb</div>
<div class="t" style="left:644.50px;top:597.80px;font-size:34.4px;color:#000;font-weight:normal;font-style:normal;font-family:'Liberation Sans', sans-serif;">22.06.2024</div>
<div class="t" style="left:835.50px;top:597.80px;font-size:34.4px;color:#000;font-weight:normal;font-style:normal;font-family:'Liberation Sans', sans-serif;">25.06.2024</div>
<div class="t" style="left:1020.00px;top:597.80px;font-size:34.4px;color:#000;font-weight:normal;font-style:normal;font-family:'Liberation Sans', sans-serif;">Ausstehend</div>
<div class="t" style="left:53.00px;top:666.30px;font-size:34.4px;color:#000;font-weight:normal;font-style:normal;font-family:'Liberation Sans', sans-serif;">Julia Becker</div>
<div class="t" style="left:359.00px;top:666.30px;font-size:34.4px;color:#000;font-weight:normal;font-style:normal;font-family:'Liberation Sans', sans-serif;">IT</div>
<div class="t" style="left:644.50px;top:666.30px;font-size:34.4px;color:#000;font-weight:normal;font-style:normal;font-family:'Liberation Sans', sans-serif;">15.08.2024</div>
<div class="t" style="left:835.50px;top:666.30px;font-size:34.4px;color:#000;font-weight:normal;font-style:normal;font-family:'Liberation Sans', sans-serif;">22.08.2024</div>
<div class="t" style="left:1018.00px;top:666.30px;font-size:34.4px;color:#000;font-weight:normal;font-style:normal;font-family:'Liberation Sans', sans-serif;">Genehmigt</div>
<div class="t" style="left:51.00px;top:715.30px;font-size:34.4px;color:#000;font-weight:normal;font-style:normal;font-family:'Liberation Sans', sans-serif;">Marc König</div>
<div class="t" style="left:359.00px;top:715.30px;font-size:34.4px;color:#000;font-weight:normal;font-style:normal;font-family:'Liberation Sans', sans-serif;">HR</div>
<div class="t" style="left:644.50px;top:715.30px;font-size:34.4px;color:#000;font-weight:normal;font-style:normal;font-family:'Liberation Sans', sans-serif;">12.09.2024</div>
<div class="t" style="left:835.50px;top:715.30px;font-size:34.4px;color:#000;font-weight:normal;font-style:normal;font-family:'Liberation Sans', sans-serif;">15.09.2024</div>
<div class="t" style="left:1018.00px;top:715.30px;font-size:34.4px;color:#000;font-weight:normal;font-style:normal;font-family:'Liberation Sans', sans-serif;">Genehmigt</div>
<div class="t" style="left:52.00px;top:764.30px;font-size:34.4px;color:#000;font-weight:normal;font-style:normal;font-family:'Liberation Sans', sans-serif;">Sara Weber</div>
<div class="t" style="left:359.00px;top:764.30px;font-size:34.4px;color:#000;font-weight:normal;font-style:normal;font-family:'Liberation Sans', sans-serif;">Marketing</div>
<div class="t" style="left:644.50px;top:764.30px;font-size:34.4px;color:#000;font-weight:normal;font-style:normal;font-family:'Liberation Sans', sans-serif;">05.07.2024</div>
<div class="t" style="left:835.50px;top:764.30px;font-size:34.4px;color:#000;font-weight:normal;font-style:normal;font-family:'Liberation Sans', sans-serif;">10.07.2024</div>
<div class="t" style="left:1020.00px;top:764.30px;font-size:34.4px;color:#000;font-weight:normal;font-style:normal;font-family:'Liberation Sans', sans-serif;">Ausstehend</div>
<div class="t" style="left:51.00px;top:813.30px;font-size:34.4px;color:#000;font-weight:normal;font-style:normal;font-family:'Liberation Sans', sans-serif;">David Klein</div>
<div class="t" style="left:359.00px;top:813.30px;font-size:34.4px;color:#000;font-weight:normal;font-style:normal;font-family:'Liberation Sans', sans-serif;">Logistik</div>
<div class="t" style="left:644.50px;top:813.30px;font-size:34.4px;color:#000;font-weight:normal;font-style:normal;font-family:'Liberation Sans', sans-serif;">19.07.2024</div>
<div class="t" style="left:835.50px;top:813.30px;font-size:34.4px;color:#000;font-weight:normal;font-style:normal;font-family:'Liberation Sans', sans-serif;">23.07.2024</div>
<div class="t" style="left:1018.00px;top:813.30px;font-size:34.4px;color:#000;font-weight:normal;font-style:normal;font-family:'Liberation Sans', sans-serif;">Genehmigt</div>
<div class="t" style="left:51.00px;top:881.80px;font-size:34.4px;color:#000;font-weight:normal;font-style:normal;font-family:'Liberation Sans', sans-serif;">Elena Foster</div>
<div class="t" style="left:359.00px;top:881.80px;font-size:34.4px;color:#000;font-weight:normal;font-style:normal;font-family:'Liberation Sans', sans-serif;">Buchhaltung</div>
<div class="t" style="left:644.50px;top:881.80px;font-size:34.4px;color:#000;font-weight:normal;font-style:normal;font-family:'Liberation Sans', sans-serif;">01.08.2024</div>
<div class="t" style="left:835.50px;top:881.80px;font-size:34.4px;color:#000;font-weight:normal;font-style:normal;font-family:'Liberation Sans', sans-serif;">06.08.2024</div>
<div class="t" style="left:1020.00px;top:881.80px;font-size:34.4px;color:#000;font-weight:normal;font-style:normal;font-family:'Liberation Sans', sans-serif;">Ausstehend</div>
<div class="t" style="left:51.00px;top:950.30px;font-size:34.4px;color:#000;font-weight:normal;font-style:normal;font-family:'Liberation Sans', sans-serif;">Paul Richter</div>
<div class="t" style="left:359.00px;top:950.30px;font-size:34.4px;color:#000;font-weight:normal;font-style:normal;font-family:'Liberation Sans', sans-serif;">IT</div>
<div class="t" style="left:644.50px;top:950.30px;font-size:34.4px;color:#000;font-weight:normal;font-style:normal;font-family:'Liberation Sans', sans-serif;">10.09.2024</div>
<div class="t" style="left:835.50px;top:950.30px;font-size:34.4px;color:#000;font-weight:normal;font-style:normal;font-family:'Liberation Sans', sans-serif;">13.09.2024</div>
<div class="t" style="left:1018.00px;top:950.30px;font-size:34.4px;color:#000;font-weight:normal;font-style:normal;font-family:'Liberation Sans', sans-serif;">Genehmigt</div>
<div class="t" style="left:53.00px;top:1018.80px;font-size:34.4px;color:#000;font-weight:normal;font-style:normal;font-family:'Liberation Sans', sans-serif;">Tina Schwarz</div>
<div class="t" style="left:359.00px;top:1018.80px;font-size:34.4px;color:#000;font-weight:normal;font-style:normal;font-family:'Liberation Sans', sans-serif;">Logistik</div>
<div class="t" style="left:644.50px;top:1018.80px;font-size:34.4px;color:#000;font-weight:normal;font-style:normal;font-family:'Liberation Sans', sans-serif;">02.07.2024</div>
<div class="t" style="left:835.50px;top:1018.80px;font-size:34.4px;color:#000;font-weight:normal;font-style:normal;font-family:'Liberation Sans', sans-serif;">08.07.2024</div>
<div class="t" style="left:1018.00px;top:1018.80px;font-size:34.4px;color:#000;font-weight:normal;font-style:normal;font-family:'Liberation Sans', sans-serif;">Genehmigt</div>
<div class="t" style="left:51.00px;top:1087.30px;font-size:34.4px;color:#000;font-weight:normal;font-style:normal;font-family:'Liberation Sans', sans-serif;">Lukas Frei</div>
<div class="t" style="left:362.00px;top:1087.30px;font-size:34.4px;color:#000;font-weight:normal;font-style:normal;font-family:'Liberation Sans', sans-serif;">Vertrieb</div>
<div class="t" style="left:644.50px;top:1087.30px;font-size:34.4px;color:#000;font-weight:normal;font-style:normal;font-family:'Liberation Sans', sans-serif;">21.08.2024</div>
<div class="t" style="left:835.50px;top:1087.30px;font-size:34.4px;color:#000;font-weight:normal;font-style:normal;font-family:'Liberation Sans', sans-serif;">28.08.2024</div>
<div class="t" style="left:1020.00px;top:1087.30px;font-size:34.4px;color:#000;font-weight:normal;font-style:normal;font-family:'Liberation Sans', sans-serif;">Ausstehend</div>
<div class="t" style="left:53.00px;top:1155.80px;font-size:34.4px;color:#000;font-weight:normal;font-style:normal;font-family:'Liberation Sans', sans-serif;">Jana Sommer</div>
<div class="t" style="left:359.00px;top:1155.80px;font-size:34.4px;color:#000;font-weight:normal;font-style:normal;font-family:'Liberation Sans', sans-serif;">Marketing</div>
<div class="t" style="left:644.50px;top:1155.80px;font-size:34.4px;color:#000;font-weight:normal;font-style:normal;font-family:'Liberation Sans', sans-serif;">07.09.2024</div>
<div class="t" style="left:835.50px;top:1155.80px;font-size:34.4px;color:#000;font-weight:normal;font-style:normal;font-family:'Liberation Sans', sans-serif;">13.09.2024</div>
<div class="t" style="left:1018.00px;top:1155.80px;font-size:34.4px;color:#000;font-weight:normal;font-style:normal;font-family:'Liberation Sans', sans-serif;">Genehmigt</div>
<div class="t" style="left:51.00px;top:1243.80px;font-size:34.4px;color:#000;font-weight:normal;font-style:normal;font-family:'Liberation Sans', sans-serif;">Ben Neumann</div>
<div class="t" style="left:359.00px;top:1243.80px;font-size:34.4px;color:#000;font-weight:normal;font-style:normal;font-family:'Liberation Sans', sans-serif;">HR</div>
<div class="t" style="left:644.50px;top:1243.80px;font-size:34.4px;color:#000;font-weight:normal;font-style:normal;font-family:'Liberation Sans', sans-serif;">17.08.2024</div>
<div class="t" style="left:835.50px;top:1243.80px;font-size:34.4px;color:#000;font-weight:normal;font-style:normal;font-family:'Liberation Sans', sans-serif;">24.08.2024</div>
<div class="t" style="left:1018.00px;top:1243.80px;font-size:34.4px;color:#000;font-weight:normal;font-style:normal;font-family:'Liberation Sans', sans-serif;">Genehmigt</div>
<div class="r" style="left:1563px;top:753px;width:208px;height:48px;border:3px solid #1a7045"></div>
<div class="r" style="left:1769px;top:799px;width:9px;height:9px;background:#1a7045;box-shadow:0 0 0 1px #fff"></div>
<div class="r" style="left:2082px;top:307px;width:365px;height:281px;background:#fff;border:2px solid #4d4d4d;border-radius:6px;box-shadow:0 6px 14px rgba(0,0,0,.16)"></div>
<div class="t" style="left:2103.70px;top:326.40px;font-size:20.5px;color:#3a3a3a;font-weight:bold;font-style:normal;font-family:'Liberation Sans', sans-serif;">Arbeitsmappe schützen</div>
<div class="t" style="left:2104.70px;top:375.80px;font-size:20.5px;color:#555555;font-weight:normal;font-style:normal;font-family:'Liberation Sans', sans-serif;transform:scaleX(1.0083);">Andere Personen am Ändern der</div>
<div class="t" style="left:2103.67px;top:406.00px;font-size:20.5px;color:#555555;font-weight:normal;font-style:normal;font-family:'Liberation Sans', sans-serif;transform:scaleX(1.0252);">Struktur Ihrer Arbeitsmappe,</div>
<div class="t" style="left:2103.70px;top:436.00px;font-size:20.5px;color:#555555;font-weight:normal;font-style:normal;font-family:'Liberation Sans', sans-serif;transform:scaleX(0.9976);">beispielsweise am Verschieben,</div>
<div class="t" style="left:2102.64px;top:466.20px;font-size:20.5px;color:#555555;font-weight:normal;font-style:normal;font-family:'Liberation Sans', sans-serif;transform:scaleX(1.0283);">Löschen oder Hinzufügen von</div>
<div class="t" style="left:2102.64px;top:496.40px;font-size:20.5px;color:#555555;font-weight:normal;font-style:normal;font-family:'Liberation Sans', sans-serif;transform:scaleX(1.0314);">Blättern, hindern.</div>
<div class="r" style="left:2089px;top:531px;width:353px;height:1px;background:#e6e6e6;"></div>
<svg width="2484" height="1348"><circle cx="2118.7" cy="564" r="15" fill="none" stroke="#1a86c0" stroke-width="2.2"/><path d="M2113.5,559.5 C2113.5,554.5 2124,553.5 2124,559.5 C2124,563 2118.7,563.5 2118.7,567.5" fill="none" stroke="#1a86c0" stroke-width="2.2"/><circle cx="2118.7" cy="572.5" r="1.5" fill="#1a86c0"/></svg>
<div class="t" style="left:2150.00px;top:554.50px;font-size:21px;color:#1f4e8c;font-weight:bold;font-style:normal;font-family:'Liberation Sans', sans-serif;transform:scaleX(0.9969);">Weitere Infos</div>
<svg width="2484" height="1348" style="opacity:0.92"><g fill="#ff2a4c"><path d="M2117.4,53.9 L2118.2,53.9 L2119.2,53.8 L2120.2,53.7 L2121.1,53.6 L2122.1,53.6 L2123.1,53.5 L2124.1,53.5 L2125.2,53.4 L2126.3,53.4 L2127.4,53.4 L2128.5,53.4 L2129.7,53.5 L2131.4,53.6 L2133.1,53.6 L2134.8,53.7 L2136.5,53.8 L2138.1,53.9 L2139.8,54.0 L2141.5,54.2 L2143.1,54.3 L2144.9,54.6 L2146.6,54.9 L2148.5,55.2 L2150.4,55.6 L2152.6,56.1 L2155.0,56.7 L2157.5,57.4 L2160.2,58.2 L2163.1,59.0 L2166.0,59.9 L2169.0,60.8 L2172.1,61.8 L2175.2,62.8 L2178.3,63.9 L2181.4,64.9 L2184.5,66.0 L2187.7,67.1 L2190.9,68.3 L2194.3,69.5 L2197.7,70.8 L2201.1,72.1 L2204.5,73.3 L2207.8,74.6 L2211.0,75.9 L2214.0,77.2 L2216.9,78.4 L2219.5,79.6 L2221.9,80.8 L2224.0,81.8 L2225.9,82.9 L2227.6,83.9 L2229.3,84.9 L2230.9,86.0 L2232.4,87.1 L2234.0,88.3 L2235.7,89.5 L2237.4,90.8 L2239.2,92.2 L2241.1,93.6 L2243.1,95.1 L2245.0,96.4 L2246.8,97.7 L2248.5,99.0 L2250.2,100.3 L2251.9,101.6 L2253.6,102.8 L2255.3,104.1 L2257.0,105.5 L2258.7,106.9 L2260.5,108.3 L2262.4,109.9 L2264.3,111.5 L2266.4,113.2 L2268.5,115.0 L2270.6,116.9 L2272.9,118.9 L2275.2,121.0 L2277.5,123.2 L2279.9,125.3 L2282.3,127.5 L2284.8,129.7 L2287.2,131.9 L2289.6,134.1 L2292.0,136.2 L2294.4,138.3 L2296.7,140.3 L2299.1,142.4 L2301.4,144.4 L2303.8,146.5 L2306.2,148.5 L2308.5,150.6 L2310.9,152.6 L2313.3,154.7 L2315.6,156.7 L2318.0,158.8 L2320.4,160.8 L2322.8,162.9 L2325.3,165.0 L2327.7,167.1 L2330.2,169.2 L2332.6,171.2 L2335.0,173.2 L2337.4,175.3 L2339.7,177.2 L2341.9,179.2 L2344.1,181.1 L2346.1,183.0 L2348.1,184.9 L2350.1,186.9 L2352.1,188.8 L2354.0,190.8 L2355.9,192.7 L2357.7,194.7 L2359.5,196.6 L2361.3,198.5 L2363.0,200.4 L2364.6,202.3 L2366.2,204.2 L2367.7,206.1 L2369.1,208.0 L2370.5,209.8 L2371.7,211.7 L2372.9,213.5 L2374.1,215.4 L2375.2,217.3 L2376.4,219.2 L2377.5,221.2 L2378.6,223.2 L2379.7,225.3 L2380.8,227.3 L2382.0,229.5 L2383.2,231.6 L2384.4,233.7 L2385.6,235.7 L2386.8,237.7 L2387.9,239.7 L2389.1,241.7 L2390.2,243.7 L2391.3,245.7 L2392.3,247.6 L2393.3,249.5 L2394.3,251.5 L2395.2,253.3 L2396.1,255.2 L2396.9,257.1 L2397.7,258.9 L2398.4,260.8 L2399.1,262.7 L2399.8,264.7 L2400.5,266.7 L2401.2,268.7 L2401.8,270.8 L2402.5,272.9 L2403.2,275.0 L2404.0,277.2 L2404.8,279.4 L2405.5,281.5 L2406.3,283.6 L2407.1,285.7 L2407.8,287.8 L2408.6,289.9 L2409.3,292.0 L2410.1,294.0 L2410.8,296.1 L2411.5,298.1 L2412.3,300.2 L2413.0,302.2 L2413.7,304.2 L2414.4,306.2 L2415.1,308.3 L2415.8,310.3 L2416.5,312.3 L2417.2,314.4 L2418.0,316.4 L2418.6,318.4 L2419.3,320.5 L2420.0,322.5 L2420.7,324.5 L2421.4,326.6 L2422.0,328.6 L2422.7,330.6 L2423.3,332.6 L2423.9,334.6 L2424.5,336.6 L2425.1,338.6 L2425.7,340.7 L2426.3,342.8 L2426.9,344.9 L2427.6,347.0 L2428.2,349.1 L2428.8,351.3 L2429.5,353.5 L2430.2,355.6 L2430.9,357.8 L2431.6,360.0 L2432.3,362.1 L2433.0,364.2 L2433.7,366.3 L2434.4,368.3 L2435.0,370.4 L2435.7,372.4 L2436.3,374.4 L2436.9,376.4 L2437.5,378.4 L2438.1,380.5 L2438.7,382.6 L2439.4,384.7 L2440.0,386.7 L2440.6,388.8 L2441.1,390.7 L2441.7,392.7 L2442.2,394.6 L2442.6,396.4 L2443.0,398.3 L2443.3,400.0 L2443.6,401.8 L2443.9,403.5 L2444.0,405.2 L2444.2,407.0 L2444.3,408.9 L2444.3,410.7 L2444.4,412.7 L2444.4,414.7 L2444.4,416.7 L2444.4,418.8 L2444.4,420.9 L2444.5,423.1 L2444.5,425.3 L2444.6,427.4 L2444.6,429.5 L2444.7,431.5 L2444.7,433.6 L2444.8,435.7 L2444.8,437.7 L2444.9,439.8 L2444.9,441.9 L2444.9,443.9 L2445.0,446.0 L2445.0,448.1 L2445.0,450.1 L2445.0,452.2 L2445.1,454.3 L2445.1,456.4 L2445.1,458.5 L2445.1,460.5 L2445.2,462.6 L2445.2,464.6 L2445.2,466.6 L2445.2,468.6 L2445.1,470.6 L2445.1,472.6 L2445.0,474.5 L2444.9,476.5 L2444.8,478.4 L2444.7,480.4 L2444.5,482.4 L2444.3,484.4 L2444.2,486.5 L2444.0,488.5 L2443.8,490.6 L2443.6,492.6 L2443.4,494.7 L2443.2,496.8 L2443.0,498.9 L2442.9,501.0 L2442.7,503.1 L2442.6,505.1 L2442.4,507.2 L2442.2,509.3 L2442.1,511.3 L2441.9,513.4 L2441.8,515.5 L2441.6,517.5 L2441.4,519.6 L2441.2,521.7 L2441.1,523.8 L2440.9,525.9 L2440.7,528.0 L2440.5,530.1 L2440.4,532.2 L2440.2,534.3 L2440.1,536.3 L2439.9,538.3 L2439.7,540.3 L2439.5,542.3 L2439.3,544.3 L2439.0,546.2 L2438.8,548.2 L2438.5,550.1 L2438.1,552.1 L2437.8,554.1 L2437.4,556.1 L2437.0,558.1 L2436.6,560.1 L2436.2,562.1 L2435.8,564.2 L2435.3,566.2 L2434.9,568.2 L2434.4,570.2 L2433.9,572.3 L2433.3,574.5 L2432.8,576.7 L2432.3,578.8 L2431.8,580.9 L2431.3,583.0 L2430.8,585.0 L2430.3,586.9 L2429.7,588.8 L2429.1,590.6 L2428.5,592.2 L2427.9,593.8 L2427.1,595.4 L2426.3,597.0 L2425.4,598.7 L2424.5,600.3 L2423.6,601.8 L2422.7,603.2 L2421.7,604.7 L2420.7,606.0 L2419.6,607.4 L2418.4,608.7 L2417.1,610.0 L2415.7,611.3 L2414.2,612.5 L2412.5,613.8 L2410.6,615.0 L2408.5,616.3 L2406.3,617.6 L2403.9,618.8 L2401.5,620.1 L2399.0,621.3 L2396.4,622.5 L2393.8,623.6 L2391.3,624.7 L2388.7,625.8 L2386.2,626.7 L2383.9,627.6 L2381.8,628.4 L2379.7,629.1 L2377.6,629.7 L2375.6,630.3 L2373.4,630.9 L2371.1,631.5 L2368.6,632.1 L2365.9,632.7 L2362.9,633.3 L2359.6,634.0 L2356.0,634.8 L2352.1,635.6 L2347.8,636.5 L2343.3,637.3 L2338.5,638.3 L2333.5,639.2 L2328.4,640.1 L2323.2,641.0 L2318.0,641.9 L2312.7,642.8 L2307.5,643.7 L2302.4,644.5 L2297.4,645.3 L2292.4,646.1 L2287.5,646.9 L2282.8,647.8 L2278.1,648.6 L2273.6,649.4 L2269.1,650.1 L2264.6,650.8 L2260.1,651.4 L2255.5,651.8 L2250.7,652.2 L2245.8,652.4 L2240.6,652.5 L2235.0,652.4 L2228.9,652.3 L2222.5,652.0 L2215.8,651.5 L2208.9,651.0 L2201.9,650.4 L2194.8,649.8 L2187.8,649.0 L2180.7,648.2 L2173.9,647.4 L2167.2,646.5 L2160.8,645.7 L2154.7,644.7 L2148.6,643.8 L2142.6,642.7 L2136.7,641.6 L2130.9,640.5 L2125.2,639.3 L2119.5,638.0 L2113.9,636.8 L2108.3,635.5 L2102.8,634.2 L2097.4,632.8 L2092.0,631.5 L2086.6,630.2 L2081.2,628.9 L2075.9,627.5 L2070.6,626.2 L2065.5,624.9 L2060.5,623.6 L2055.7,622.2 L2051.1,620.8 L2046.8,619.3 L2042.7,617.8 L2039.1,616.3 L2035.8,614.8 L2032.9,613.2 L2030.2,611.5 L2027.8,609.8 L2025.5,607.9 L2023.3,606.0 L2021.3,604.0 L2019.3,602.0 L2017.5,599.8 L2015.6,597.7 L2013.9,595.5 L2012.1,593.2 L2010.5,591.1 L2009.2,589.4 L2008.3,588.0 L2007.5,586.5 L2006.8,585.0 L2006.2,583.5 L2005.5,581.8 L2004.9,580.0 L2004.2,578.1 L2003.5,576.0 L2002.7,573.7 L2001.7,571.3 L2000.7,568.8 L1999.6,566.6 L1998.6,564.5 L1997.6,562.4 L1996.6,560.4 L1995.6,558.4 L1994.7,556.4 L1993.7,554.4 L1992.8,552.5 L1992.0,550.6 L1991.1,548.7 L1990.4,546.9 L1989.6,545.1 L1988.9,543.2 L1988.3,541.3 L1987.6,539.4 L1987.0,537.5 L1986.4,535.6 L1985.8,533.7 L1985.2,531.8 L1984.7,529.9 L1984.2,527.9 L1983.7,525.9 L1983.2,524.0 L1982.7,522.0 L1982.3,520.2 L1981.9,518.4 L1981.5,516.5 L1981.1,514.6 L1980.8,512.6 L1980.5,510.6 L1980.1,508.5 L1979.8,506.4 L1979.4,504.3 L1979.1,502.1 L1978.7,499.9 L1978.3,497.6 L1977.9,495.4 L1977.4,493.2 L1977.0,491.1 L1976.6,488.9 L1976.1,486.8 L1975.7,484.7 L1975.3,482.7 L1974.8,480.6 L1974.4,478.6 L1974.0,476.6 L1973.6,474.6 L1973.3,472.6 L1973.0,470.7 L1972.7,468.8 L1972.4,466.9 L1972.1,464.9 L1971.8,462.8 L1971.6,460.7 L1971.3,458.5 L1970.9,456.3 L1970.6,454.0 L1970.2,451.7 L1969.7,449.3 L1969.1,446.8 L1968.5,444.3 L1967.8,441.9 L1967.0,439.5 L1966.3,437.2 L1965.5,435.0 L1964.8,432.9 L1964.0,430.9 L1963.3,428.9 L1962.7,427.0 L1962.1,425.2 L1961.6,423.5 L1961.1,421.8 L1960.7,420.0 L1960.2,418.1 L1959.8,416.3 L1959.3,414.4 L1958.9,412.5 L1958.5,410.5 L1958.1,408.6 L1957.8,406.6 L1957.4,404.6 L1957.1,402.6 L1956.7,400.6 L1956.4,398.6 L1956.1,396.6 L1955.8,394.6 L1955.5,392.6 L1955.3,390.6 L1955.0,388.7 L1954.8,386.7 L1954.6,384.7 L1954.4,382.7 L1954.2,380.7 L1954.0,378.7 L1953.9,376.8 L1953.8,374.8 L1953.7,372.8 L1953.7,370.9 L1953.6,368.9 L1953.6,366.9 L1953.6,364.9 L1953.7,362.9 L1953.7,360.9 L1953.8,358.8 L1953.8,356.8 L1953.9,354.7 L1953.9,352.6 L1954.0,350.5 L1954.0,348.4 L1954.1,346.4 L1954.2,344.3 L1954.2,342.2 L1954.3,340.2 L1954.4,338.1 L1954.5,336.1 L1954.6,334.0 L1954.7,332.0 L1954.8,329.9 L1954.9,327.9 L1955.0,325.8 L1955.1,323.7 L1955.2,321.6 L1955.2,319.5 L1955.3,317.5 L1955.4,315.4 L1955.5,313.4 L1955.6,311.4 L1955.7,309.4 L1955.8,307.4 L1956.0,305.5 L1956.1,303.5 L1956.4,301.6 L1956.6,299.6 L1956.9,297.6 L1957.2,295.6 L1957.6,293.6 L1957.9,291.6 L1958.3,289.6 L1958.7,287.6 L1959.2,285.6 L1959.6,283.5 L1960.1,281.5 L1960.6,279.5 L1961.1,277.4 L1961.7,275.4 L1962.3,273.4 L1962.9,271.4 L1963.5,269.3 L1964.2,267.3 L1964.8,265.3 L1965.5,263.2 L1966.2,261.2 L1967.0,259.2 L1967.8,257.2 L1968.6,255.1 L1969.4,253.1 L1970.2,251.1 L1971.1,249.1 L1972.0,247.1 L1972.9,245.0 L1973.9,243.0 L1974.9,241.0 L1975.9,238.9 L1976.9,236.9 L1977.9,234.9 L1979.0,232.8 L1980.0,230.8 L1981.1,228.7 L1982.1,226.7 L1983.2,224.7 L1984.4,222.7 L1985.5,220.6 L1986.7,218.6 L1987.9,216.5 L1989.1,214.4 L1990.3,212.3 L1991.6,210.2 L1992.8,208.0 L1993.9,205.9 L1995.1,203.7 L1996.2,201.5 L1997.3,199.3 L1998.3,197.2 L1999.3,195.1 L2000.3,192.9 L2001.3,190.8 L2002.2,188.8 L2003.2,186.7 L2004.1,184.7 L2005.1,182.7 L2006.1,180.7 L2007.1,178.7 L2008.2,176.6 L2009.3,174.6 L2010.3,172.5 L2011.4,170.4 L2012.5,168.4 L2013.6,166.4 L2014.8,164.3 L2015.9,162.3 L2017.1,160.3 L2018.3,158.3 L2019.5,156.3 L2020.8,154.3 L2022.1,152.3 L2023.4,150.3 L2024.8,148.2 L2026.2,146.2 L2027.6,144.2 L2029.1,142.2 L2030.5,140.2 L2032.1,138.2 L2033.6,136.2 L2035.1,134.2 L2036.7,132.2 L2038.3,130.1 L2039.9,128.0 L2041.6,125.9 L2043.2,123.8 L2044.9,121.7 L2046.6,119.6 L2048.3,117.5 L2049.9,115.5 L2051.6,113.5 L2053.3,111.6 L2055.0,109.8 L2056.7,108.0 L2058.3,106.4 L2060.0,104.9 L2061.7,103.4 L2063.4,102.0 L2065.2,100.6 L2067.1,99.2 L2068.9,97.9 L2070.9,96.5 L2072.8,95.1 L2074.8,93.8 L2076.8,92.4 L2078.8,91.0 L2080.7,89.6 L2082.6,88.3 L2084.4,87.0 L2086.3,85.8 L2088.2,84.5 L2090.1,83.3 L2092.0,82.0 L2094.0,80.7 L2095.9,79.4 L2097.8,78.0 L2099.7,76.6 L2101.5,75.1 L2103.3,73.6 L2104.9,72.0 L2106.5,70.4 L2107.9,68.8 L2109.2,67.3 L2110.4,65.7 L2111.6,64.2 L2112.7,62.8 L2113.7,61.3 L2114.6,59.9 L2115.5,58.6 L2116.4,57.3 L2117.2,56.0 L2118.2,54.4 L2119.2,52.8 L2120.2,51.1 L2121.2,49.5 L2122.1,47.9 L2122.9,46.3 L2123.8,44.7 L2124.5,43.3 L2125.2,42.0 L2125.8,40.9 L2126.2,40.0 L2126.6,39.3 L2107.4,28.7 L2106.9,29.5 L2106.3,30.6 L2105.7,31.7 L2105.0,33.0 L2104.3,34.3 L2103.6,35.7 L2102.8,37.2 L2101.9,38.7 L2101.1,40.1 L2100.3,41.5 L2099.5,42.8 L2098.8,44.0 L2097.9,45.4 L2097.1,46.8 L2096.2,48.1 L2095.5,49.4 L2094.7,50.6 L2093.9,51.8 L2093.1,52.9 L2092.3,54.1 L2091.5,55.2 L2090.6,56.3 L2089.7,57.4 L2088.7,58.4 L2087.6,59.6 L2086.4,60.7 L2085.1,61.9 L2083.6,63.1 L2082.0,64.4 L2080.3,65.8 L2078.6,67.1 L2076.8,68.5 L2074.9,70.0 L2073.0,71.4 L2071.1,72.9 L2069.3,74.4 L2067.5,75.8 L2065.7,77.2 L2063.9,78.6 L2062.0,80.0 L2060.0,81.5 L2058.0,83.0 L2056.0,84.6 L2053.9,86.2 L2051.8,87.9 L2049.8,89.7 L2047.7,91.6 L2045.7,93.6 L2043.7,95.6 L2041.8,97.8 L2039.9,99.9 L2038.1,102.1 L2036.3,104.4 L2034.6,106.6 L2032.8,108.9 L2031.1,111.1 L2029.5,113.4 L2027.9,115.6 L2026.3,117.7 L2024.7,119.9 L2023.2,122.0 L2021.6,124.2 L2020.1,126.3 L2018.6,128.5 L2017.1,130.6 L2015.6,132.8 L2014.2,134.9 L2012.7,137.1 L2011.3,139.3 L2009.9,141.4 L2008.6,143.6 L2007.2,145.7 L2005.9,147.9 L2004.6,150.1 L2003.3,152.2 L2002.1,154.4 L2000.9,156.5 L1999.7,158.6 L1998.5,160.8 L1997.4,162.9 L1996.2,165.0 L1995.1,167.1 L1994.0,169.2 L1992.9,171.3 L1991.8,173.5 L1990.7,175.7 L1989.7,177.8 L1988.7,179.9 L1987.7,182.1 L1986.7,184.2 L1985.8,186.2 L1984.8,188.3 L1983.9,190.3 L1982.9,192.3 L1981.9,194.3 L1980.9,196.3 L1979.9,198.3 L1978.8,200.3 L1977.6,202.3 L1976.5,204.4 L1975.3,206.4 L1974.1,208.5 L1972.9,210.6 L1971.7,212.7 L1970.4,214.8 L1969.2,217.0 L1968.1,219.1 L1966.9,221.3 L1965.8,223.4 L1964.7,225.5 L1963.7,227.6 L1962.6,229.8 L1961.6,231.9 L1960.5,234.0 L1959.5,236.2 L1958.5,238.3 L1957.5,240.4 L1956.5,242.6 L1955.6,244.7 L1954.6,246.9 L1953.7,249.0 L1952.8,251.2 L1951.9,253.3 L1951.1,255.5 L1950.2,257.6 L1949.4,259.7 L1948.6,261.9 L1947.8,264.0 L1947.1,266.1 L1946.3,268.3 L1945.6,270.4 L1944.9,272.6 L1944.2,274.7 L1943.5,276.8 L1942.8,279.0 L1942.1,281.1 L1941.5,283.2 L1940.9,285.4 L1940.3,287.5 L1939.7,289.7 L1939.1,291.9 L1938.6,294.0 L1938.1,296.2 L1937.6,298.4 L1937.2,300.6 L1936.8,302.9 L1936.4,305.1 L1936.1,307.3 L1935.8,309.5 L1935.5,311.6 L1935.2,313.8 L1935.0,315.9 L1934.7,318.0 L1934.5,320.1 L1934.3,322.1 L1934.0,324.2 L1933.8,326.3 L1933.6,328.4 L1933.4,330.5 L1933.2,332.6 L1933.0,334.8 L1932.9,336.9 L1932.7,339.0 L1932.6,341.1 L1932.4,343.2 L1932.3,345.3 L1932.1,347.4 L1932.0,349.5 L1931.9,351.6 L1931.7,353.7 L1931.6,355.7 L1931.5,357.8 L1931.4,360.0 L1931.2,362.1 L1931.1,364.2 L1931.0,366.4 L1930.9,368.6 L1930.9,370.8 L1930.8,373.0 L1930.8,375.2 L1930.8,377.4 L1930.8,379.6 L1930.8,381.8 L1930.8,384.0 L1930.9,386.1 L1930.9,388.3 L1931.0,390.5 L1931.1,392.7 L1931.2,394.9 L1931.3,397.0 L1931.4,399.2 L1931.6,401.4 L1931.7,403.5 L1931.9,405.7 L1932.1,407.9 L1932.3,410.0 L1932.5,412.2 L1932.7,414.5 L1933.0,416.7 L1933.2,419.0 L1933.6,421.2 L1934.0,423.5 L1934.4,425.8 L1934.9,428.2 L1935.5,430.7 L1936.2,433.1 L1936.9,435.5 L1937.7,437.8 L1938.5,440.0 L1939.2,442.1 L1940.0,444.1 L1940.7,446.1 L1941.3,448.0 L1941.9,449.8 L1942.4,451.5 L1942.9,453.2 L1943.3,454.9 L1943.6,456.7 L1943.9,458.5 L1944.2,460.4 L1944.5,462.3 L1944.8,464.3 L1945.1,466.4 L1945.4,468.5 L1945.7,470.6 L1946.0,472.8 L1946.3,475.1 L1946.7,477.4 L1947.1,479.6 L1947.5,481.8 L1948.0,483.9 L1948.4,486.1 L1948.9,488.2 L1949.3,490.3 L1949.8,492.3 L1950.2,494.4 L1950.6,496.4 L1951.0,498.4 L1951.4,500.4 L1951.7,502.4 L1952.0,504.3 L1952.3,506.2 L1952.6,508.2 L1952.8,510.2 L1953.0,512.3 L1953.3,514.4 L1953.5,516.6 L1953.8,518.8 L1954.1,521.0 L1954.5,523.3 L1954.9,525.6 L1955.3,528.0 L1955.8,530.2 L1956.2,532.4 L1956.7,534.6 L1957.2,536.8 L1957.8,539.0 L1958.3,541.3 L1958.9,543.5 L1959.5,545.8 L1960.2,548.1 L1960.9,550.3 L1961.6,552.6 L1962.4,554.9 L1963.2,557.3 L1964.0,559.6 L1964.9,561.9 L1965.8,564.2 L1966.8,566.4 L1967.7,568.6 L1968.6,570.8 L1969.6,573.0 L1970.6,575.1 L1971.5,577.2 L1972.4,579.2 L1973.3,581.2 L1974.1,582.9 L1974.8,584.6 L1975.5,586.4 L1976.3,588.4 L1977.1,590.5 L1978.1,592.9 L1979.2,595.3 L1980.5,597.9 L1981.9,600.6 L1983.6,603.4 L1985.5,606.2 L1987.5,608.9 L1989.5,611.3 L1991.4,613.6 L1993.5,616.1 L1995.7,618.8 L1998.2,621.5 L2000.9,624.3 L2003.8,627.1 L2006.9,629.9 L2010.3,632.6 L2014.0,635.3 L2018.0,637.9 L2022.2,640.4 L2026.7,642.7 L2031.3,644.9 L2036.1,647.0 L2041.1,648.9 L2046.2,650.8 L2051.4,652.7 L2056.8,654.5 L2062.2,656.2 L2067.6,657.8 L2073.1,659.4 L2078.5,661.0 L2084.0,662.5 L2089.5,664.0 L2095.1,665.4 L2100.8,666.8 L2106.6,668.2 L2112.5,669.5 L2118.5,670.8 L2124.6,672.1 L2130.8,673.3 L2137.1,674.4 L2143.4,675.4 L2149.9,676.4 L2156.4,677.3 L2163.1,678.2 L2170.0,679.1 L2177.1,679.9 L2184.4,680.7 L2191.7,681.5 L2199.1,682.1 L2206.5,682.7 L2213.9,683.2 L2221.1,683.5 L2228.1,683.7 L2234.9,683.7 L2241.4,683.5 L2247.7,683.1 L2253.6,682.5 L2259.3,681.6 L2264.8,680.6 L2269.9,679.5 L2274.9,678.3 L2279.7,677.0 L2284.4,675.7 L2288.9,674.4 L2293.4,673.1 L2297.9,671.9 L2302.6,670.7 L2307.5,669.5 L2312.6,668.3 L2317.9,666.9 L2323.1,665.6 L2328.3,664.2 L2333.5,662.8 L2338.6,661.4 L2343.5,660.0 L2348.3,658.7 L2352.8,657.5 L2357.1,656.3 L2361.0,655.2 L2364.5,654.2 L2367.7,653.4 L2370.7,652.6 L2373.5,651.9 L2376.1,651.2 L2378.7,650.5 L2381.1,649.8 L2383.6,649.0 L2386.0,648.2 L2388.5,647.3 L2391.1,646.4 L2393.8,645.3 L2396.5,644.1 L2399.2,642.9 L2402.0,641.6 L2404.8,640.2 L2407.6,638.8 L2410.4,637.3 L2413.2,635.8 L2415.9,634.2 L2418.5,632.6 L2421.1,630.9 L2423.5,629.2 L2425.8,627.5 L2428.0,625.7 L2430.1,623.9 L2432.0,622.1 L2433.8,620.3 L2435.5,618.4 L2437.1,616.5 L2438.5,614.5 L2439.9,612.6 L2441.3,610.6 L2442.5,608.7 L2443.7,606.7 L2444.9,604.6 L2446.0,602.4 L2447.1,600.0 L2448.1,597.6 L2449.0,595.3 L2449.8,592.9 L2450.5,590.6 L2451.2,588.3 L2451.8,586.1 L2452.4,583.9 L2453.0,581.8 L2453.6,579.7 L2454.1,577.7 L2454.7,575.6 L2455.4,573.5 L2455.9,571.3 L2456.5,569.2 L2457.1,567.0 L2457.6,564.9 L2458.1,562.7 L2458.6,560.5 L2459.1,558.4 L2459.6,556.2 L2460.0,554.0 L2460.4,551.8 L2460.8,549.6 L2461.2,547.4 L2461.6,545.2 L2461.9,543.0 L2462.2,540.8 L2462.4,538.7 L2462.7,536.5 L2462.9,534.4 L2463.2,532.4 L2463.4,530.3 L2463.7,528.3 L2463.9,526.2 L2464.2,524.1 L2464.5,522.1 L2464.7,520.0 L2465.0,517.9 L2465.3,515.8 L2465.5,513.7 L2465.8,511.6 L2466.0,509.5 L2466.3,507.4 L2466.5,505.3 L2466.7,503.2 L2467.0,501.1 L2467.2,499.0 L2467.4,497.0 L2467.6,494.9 L2467.8,492.8 L2468.0,490.7 L2468.1,488.5 L2468.3,486.4 L2468.5,484.2 L2468.6,482.1 L2468.8,479.9 L2468.9,477.7 L2469.0,475.5 L2469.1,473.3 L2469.1,471.1 L2469.2,468.9 L2469.2,466.7 L2469.2,464.6 L2469.2,462.4 L2469.1,460.3 L2469.1,458.2 L2469.1,456.1 L2469.1,454.0 L2469.0,451.9 L2469.0,449.9 L2469.0,447.8 L2469.0,445.7 L2468.9,443.6 L2468.9,441.5 L2468.9,439.4 L2468.8,437.3 L2468.8,435.2 L2468.7,433.1 L2468.7,431.0 L2468.6,428.8 L2468.6,426.7 L2468.5,424.7 L2468.4,422.7 L2468.4,420.7 L2468.4,418.7 L2468.4,416.6 L2468.4,414.5 L2468.4,412.3 L2468.3,410.1 L2468.2,407.8 L2468.1,405.5 L2467.9,403.1 L2467.7,400.7 L2467.4,398.2 L2467.0,395.8 L2466.5,393.4 L2466.0,391.1 L2465.4,388.8 L2464.9,386.5 L2464.2,384.3 L2463.6,382.1 L2463.0,379.9 L2462.4,377.8 L2461.7,375.7 L2461.1,373.7 L2460.5,371.6 L2459.9,369.4 L2459.2,367.3 L2458.5,365.1 L2457.8,362.9 L2457.1,360.8 L2456.4,358.7 L2455.7,356.6 L2455.0,354.6 L2454.3,352.5 L2453.7,350.5 L2453.1,348.5 L2452.5,346.5 L2451.9,344.6 L2451.4,342.5 L2450.9,340.5 L2450.3,338.5 L2449.8,336.4 L2449.3,334.3 L2448.8,332.2 L2448.2,330.1 L2447.7,327.9 L2447.2,325.8 L2446.6,323.6 L2446.0,321.4 L2445.4,319.3 L2444.8,317.1 L2444.2,315.0 L2443.5,312.9 L2442.9,310.7 L2442.3,308.6 L2441.7,306.5 L2441.0,304.3 L2440.4,302.2 L2439.7,300.1 L2439.0,297.9 L2438.3,295.8 L2437.6,293.7 L2436.8,291.5 L2436.1,289.4 L2435.3,287.3 L2434.6,285.1 L2433.8,283.0 L2433.0,280.9 L2432.3,278.9 L2431.5,276.8 L2430.7,274.7 L2430.0,272.6 L2429.2,270.6 L2428.5,268.6 L2427.8,266.6 L2427.2,264.6 L2426.5,262.6 L2425.8,260.5 L2425.0,258.3 L2424.3,256.1 L2423.5,253.9 L2422.7,251.7 L2421.8,249.4 L2420.9,247.1 L2419.9,244.8 L2418.9,242.5 L2417.9,240.2 L2416.8,238.0 L2415.8,235.7 L2414.7,233.5 L2413.6,231.3 L2412.5,229.1 L2411.3,226.9 L2410.2,224.8 L2409.1,222.6 L2407.9,220.5 L2406.8,218.4 L2405.7,216.4 L2404.6,214.3 L2403.4,212.2 L2402.2,210.1 L2401.0,208.0 L2399.8,205.8 L2398.5,203.5 L2397.1,201.3 L2395.6,199.0 L2394.1,196.7 L2392.5,194.3 L2390.9,192.0 L2389.2,189.7 L2387.4,187.4 L2385.7,185.2 L2383.8,182.9 L2382.0,180.7 L2380.1,178.4 L2378.1,176.2 L2376.2,173.9 L2374.2,171.7 L2372.1,169.5 L2370.0,167.3 L2367.9,165.1 L2365.6,162.8 L2363.3,160.5 L2360.9,158.3 L2358.6,156.1 L2356.1,153.9 L2353.7,151.8 L2351.3,149.6 L2348.9,147.5 L2346.5,145.4 L2344.2,143.3 L2341.9,141.2 L2339.6,139.2 L2337.4,137.1 L2335.0,135.0 L2332.7,132.8 L2330.4,130.7 L2328.1,128.6 L2325.8,126.5 L2323.5,124.4 L2321.2,122.2 L2318.9,120.1 L2316.6,118.0 L2314.3,115.9 L2312.0,113.8 L2309.7,111.7 L2307.3,109.6 L2305.0,107.4 L2302.6,105.2 L2300.1,103.0 L2297.7,100.8 L2295.3,98.7 L2292.9,96.5 L2290.5,94.4 L2288.2,92.4 L2285.9,90.4 L2283.7,88.5 L2281.5,86.7 L2279.5,85.1 L2277.5,83.5 L2275.5,81.9 L2273.6,80.5 L2271.8,79.0 L2269.9,77.7 L2268.1,76.3 L2266.3,75.0 L2264.5,73.6 L2262.7,72.3 L2260.9,70.9 L2259.3,69.7 L2257.7,68.4 L2256.0,67.1 L2254.3,65.7 L2252.6,64.3 L2250.7,62.8 L2248.7,61.2 L2246.5,59.6 L2244.2,58.0 L2241.7,56.4 L2239.0,54.8 L2236.1,53.2 L2233.1,51.7 L2229.9,50.1 L2226.6,48.6 L2223.2,47.1 L2219.7,45.6 L2216.2,44.1 L2212.6,42.6 L2209.0,41.2 L2205.5,39.8 L2202.1,38.5 L2198.7,37.2 L2195.5,36.0 L2192.3,34.8 L2189.1,33.6 L2185.9,32.3 L2182.6,31.2 L2179.4,30.0 L2176.1,28.9 L2172.9,27.8 L2169.8,26.8 L2166.6,25.8 L2163.6,24.9 L2160.6,24.1 L2157.6,23.4 L2154.6,22.8 L2151.8,22.3 L2149.0,21.9 L2146.3,21.7 L2143.8,21.5 L2141.5,21.4 L2139.2,21.4 L2137.1,21.4 L2135.2,21.4 L2133.4,21.5 L2131.9,21.5 L2130.3,21.5 L2128.4,21.5 L2126.5,21.6 L2124.7,21.7 L2123.0,21.9 L2121.4,22.0 L2119.9,22.2 L2118.6,22.4 L2117.4,22.6 L2116.4,22.8 L2115.6,22.9 L2115.1,23.0 L2114.6,23.1 Z" stroke="#ff2a4c" stroke-width="1" stroke-linejoin="round"/><polygon points="2105.5,31 2113,22.5 2124,22 2124,50 2105,50"/></g></svg>
</body></html>
